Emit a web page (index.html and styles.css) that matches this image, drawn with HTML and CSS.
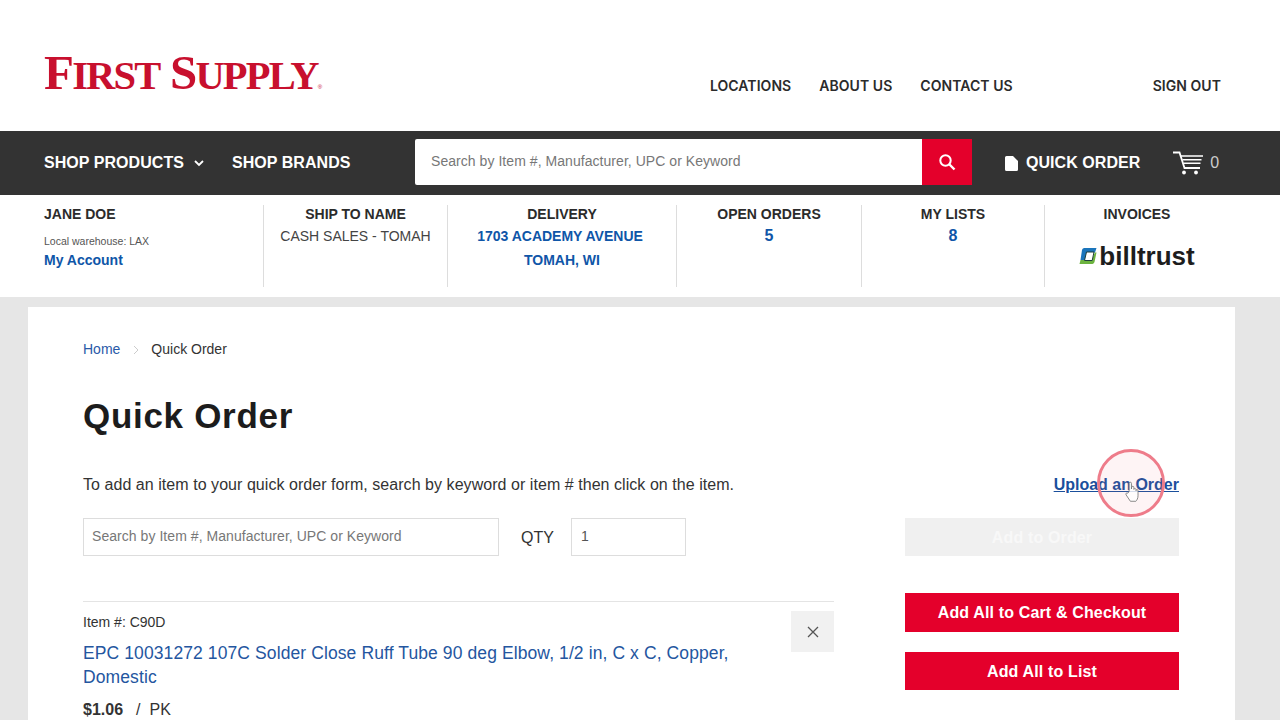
FILE: index.html
```html
<!DOCTYPE html>
<html>
<head>
  <title>First Supply - Quick Order</title>
  <link rel="stylesheet" href="styles.css">
</head>
<body>
  <div class="top">
    <div class="logo">F<span class="sc">irst</span> S<span class="sc">upply</span><span class="reg">®</span></div>
    <div class="top-links">
      <a>LOCATIONS</a>
      <a>ABOUT US</a>
      <a>CONTACT US</a>
      <a class="sign-out">SIGN OUT</a>
    </div>
  </div>

  <div class="nav">
    <a class="shop">SHOP PRODUCTS
      <svg width="10" height="7" viewBox="0 0 10 7"><path d="M1 1l4 4 4-4" fill="none" stroke="#fff" stroke-width="1.8"/></svg>
    </a>
    <a class="brands">SHOP BRANDS</a>
    <div class="search">
      <div class="search-text">Search by Item #, Manufacturer, UPC or Keyword</div>
      <div class="search-btn">
        <svg width="18" height="18" viewBox="0 0 18 18"><circle cx="7.5" cy="7.5" r="5.2" fill="none" stroke="#fff" stroke-width="2"/><path d="M11.5 11.5l5 5" stroke="#fff" stroke-width="2.4"/></svg>
      </div>
    </div>
    <a class="quick">
      <svg width="13" height="15" viewBox="0 0 13 15"><path d="M0 1.5A1.5 1.5 0 0 1 1.5 0H8l5 5v8.500A1.500 1.500 0 0 1 11.500 15h-10A1.500 1.500 0 0 1 0 13.500z" fill="#fff"/></svg>
      QUICK ORDER
    </a>
    <a class="cart">
      <svg width="30" height="24" viewBox="0 0 30 24"><path d="M0 1.500h6.500l5 15.500H27" fill="none" stroke="#fff" stroke-width="1.800"/><path d="M8 5h22M9.500 8.700h19M10.500 12.300h17" fill="none" stroke="#fff" stroke-width="1.500"/><circle cx="11" cy="21.500" r="1.900" fill="#fff"/><circle cx="23" cy="21.500" r="1.900" fill="#fff"/></svg>
      <span>0</span>
    </a>
  </div>

  <div class="info">
    <div class="cell cell-user">
      <div class="cell-head">JANE DOE</div>
      <div class="warehouse">Local warehouse: LAX</div>
      <a class="account">My Account</a>
    </div>
    <div class="cell cell-ship">
      <div class="cell-head">SHIP TO NAME</div>
      <div class="ship-name">CASH SALES - TOMAH</div>
    </div>
    <div class="cell cell-delivery">
      <div class="cell-head">DELIVERY</div>
      <a class="address"><span class="street">1703 ACADEMY AVENUE</span><br>TOMAH, WI</a>
    </div>
    <div class="cell cell-orders">
      <div class="cell-head">OPEN ORDERS</div>
      <a class="count">5</a>
    </div>
    <div class="cell cell-lists">
      <div class="cell-head">MY LISTS</div>
      <a class="count">8</a>
    </div>
    <div class="cell cell-invoices">
      <div class="cell-head">INVOICES</div>
      <div class="billtrust">
        <svg width="18" height="18" viewBox="0 0 18 18">
          <path d="M5 1h12.500L16 5.500H8L6.500 13H1.500L3 3a2.500 2.500 0 0 1 2-2z" fill="#1b75bb"/>
          <path d="M16 5.500h1.500L15.500 15a2.500 2.500 0 0 1-2 2H.5l1-4h5H12.500z" fill="#6cb33f"/>
          <path d="M7.500 5h7.500l-1.800 8.500H5.500z" fill="#fff" stroke="#1d3d3a" stroke-width="1"/>
        </svg>
        <span>billtrust</span>
      </div>
    </div>
  </div>

  <div class="page">
    <div class="panel">
      <div class="crumbs">
        <a>Home</a>
        <svg width="6" height="10" viewBox="0 0 6 10"><path d="M1 1l4 4-4 4" fill="none" stroke="#ccc" stroke-width="1"/></svg>
        <span>Quick Order</span>
      </div>
      <h1>Quick Order</h1>
      <div class="intro-row">
        <div>To add an item to your quick order form, search by keyword or item # then click on the item.</div>
        <a class="upload">Upload an Order</a>
      </div>
      <div class="order-grid">
        <div class="order-left">
          <div class="form-row">
            <div class="field field-search">Search by Item #, Manufacturer, UPC or Keyword</div>
            <label>QTY</label>
            <div class="field field-qty">1</div>
          </div>
          <div class="item">
            <div class="item-body">
              <div class="item-no">Item #: C90D</div>
              <a class="item-name">EPC 10031272 107C Solder Close Ruff Tube 90 deg Elbow, 1/2 in, C x C, Copper, Domestic</a>
              <div class="item-price"><b>$1.06</b><span class="slash">/</span>PK</div>
            </div>
            <div class="remove">
              <svg width="12" height="12" viewBox="0 0 12 12"><path d="M1 1l10 10M11 1L1 11" stroke="#555" stroke-width="1.300"/></svg>
            </div>
          </div>
        </div>
        <div class="order-right">
          <div class="btn btn-off">Add to Order</div>
          <div class="btn btn-checkout">Add All to Cart &amp; Checkout</div>
          <div class="btn btn-list">Add All to List</div>
        </div>
      </div>
    </div>
  </div>

  <div class="pointer">
    <svg width="17" height="23" viewBox="0 0 20 26"><path d="M6 13V3.500a1.400 1.400 0 0 1 2.800 0V10l.2-2a1.300 1.300 0 0 1 2.600.3V10.500a1.300 1.300 0 0 1 2.500 0V12a1.200 1.200 0 0 1 2.400 0v6c0 3-1.500 5.500-2.500 6.500H7.500L2.500 17c-1-1.500.5-3 2-2z" fill="#fff" fill-opacity="0.8" stroke="#777" stroke-width="1"/></svg>
  </div>
</body>
</html>
```

FILE: styles.css
```css
html, body { height: 720px; overflow: hidden; }
body { margin: 0; background: #e6e6e6; font-family: "Liberation Sans", Arial, sans-serif; color: #222; }
a { color: #1a4f9c; }

.top { height: 131px; background: #fff; display: flex; justify-content: space-between; box-sizing: border-box; padding: 0 59px 0 44px; }
.logo { font-family: "Liberation Serif", serif; font-weight: bold; font-size: 49px; letter-spacing: -1.8px; color: #c8102e; line-height: 56px; margin-top: 45px; white-space: nowrap; }
.sc { font-size: 40.500px; text-transform: uppercase; }
.reg { font-family: "Liberation Sans", sans-serif; font-size: 6px; font-weight: normal; letter-spacing: 0; }
.top-links { display: flex; gap: 28px; margin-top: 77px; font-family: Inter, sans-serif; font-size: 14px; font-weight: 600; letter-spacing: 0.05px; line-height: 17px; }
.top-links a { color: #2b2b2b; }
.top-links .sign-out { margin-left: 112px; }

.nav { height: 64px; background: #333; display: flex; align-items: center; padding-left: 44px; font-weight: bold; font-size: 16px; letter-spacing: 0.05px; color: #fff; }
.shop { width: 188px; display: flex; align-items: center; gap: 10px; color: #fff; }
.brands { width: 183px; color: #fff; }
.search { width: 557px; height: 46px; margin-top: -3px; display: flex; background: #fff; border-radius: 2px; }
.search-text { flex: 1; padding-left: 16px; line-height: 44px; font-weight: normal; font-size: 14px; color: #777; }
.search-btn { width: 50px; background: #e4002b; display: flex; align-items: center; justify-content: center; }
.quick { margin-left: 33px; display: flex; align-items: center; gap: 8px; color: #fff; }
.cart { margin-left: 33px; display: flex; align-items: center; gap: 7px; font-weight: normal; color: #ccc; }

.info { height: 102px; background: #fff; display: flex; box-sizing: border-box; padding: 10px 0 10px 44px; font-size: 14px; }
.cell { text-align: center; border-right: 1px solid #ddd; height: 82px; flex: none; }
.cell-head { font-weight: bold; color: #2b2b2b; line-height: 18px; }
.cell-user { width: 219px; text-align: left; }
.cell-ship { width: 183px; }
.cell-delivery { width: 228px; }
.cell-orders { width: 184px; }
.cell-lists { width: 182px; }
.cell-invoices { width: 184px; border-right: 0; }
.warehouse { font-size: 10.500px; color: #555; margin-top: 11px; line-height: 14px; }
.account { display: block; font-weight: bold; margin-top: 3px; line-height: 18px; color: #0f56a8; }
.ship-name { color: #444; margin-top: 4px; line-height: 18px; }
.address { display: block; font-weight: bold; font-size: 14px; color: #0f56a8; margin-top: 1px; line-height: 24px; }
.street { margin-left: -4px; }
.count { display: block; font-weight: bold; font-size: 16px; color: #0f56a8; margin-top: 2px; line-height: 22px; }
.billtrust { display: flex; justify-content: center; align-items: center; gap: 2px; margin-top: 18px; font-weight: bold; font-size: 26px; line-height: 30px; color: #1d1d1d; }

.page { padding: 10px 45px 0 28px; }
.panel { background: #fff; height: 500px; box-sizing: border-box; padding: 34px 56px 0 55px; }
.crumbs { display: flex; align-items: center; gap: 12.500px; font-size: 14px; line-height: 17px; color: #333; }
.crumbs a { color: #2a5aa8; }
h1 { margin: 26px 0 0; font-size: 35px; font-weight: bold; letter-spacing: 0.7px; line-height: 64px; color: #1c1c1c; }
.intro-row { display: flex; justify-content: space-between; margin-top: 27px; font-size: 16px; line-height: 19px; color: #333; letter-spacing: 0.05px; }
.upload { text-decoration: underline; font-weight: bold; letter-spacing: 0; color: #1a4f9c; }

.order-grid { display: flex; justify-content: space-between; margin-top: 24px; }
.order-left { width: 751px; }
.order-right { width: 274px; display: flex; flex-direction: column; }
.form-row { display: flex; align-items: center; height: 38px; }
.field { border: 1px solid #ddd; box-sizing: border-box; height: 38px; line-height: 35px; font-size: 14px; color: #777; }
.field-search { width: 416px; padding-left: 8px; letter-spacing: 0.05px; }
.field-qty { width: 115px; padding-left: 9px; color: #555; }
.form-row label { width: 72px; padding-left: 22px; box-sizing: border-box; font-size: 16px; color: #333; margin-top: 2px; }

.item { margin-top: 45px; border-top: 1px solid #e4e4e4; display: flex; justify-content: space-between; align-items: flex-start; padding-top: 9px; }
.item-body { width: 660px; }
.item-no { font-size: 14px; line-height: 22px; color: #333; }
.item-name { display: block; margin-top: 8px; font-size: 17.500px; line-height: 24px; letter-spacing: 0.1px; color: #24569f; }
.item-price { margin-top: 11px; font-size: 16px; line-height: 19px; color: #333; }
.slash { margin: 0 9px 0 13px; }
.remove { width: 43px; height: 41px; background: #f1f1f1; display: flex; align-items: center; justify-content: center; }

.btn { height: 39px; line-height: 39px; text-align: center; font-size: 16px; font-weight: bold; letter-spacing: 0.15px; color: #fff; }
.btn-off { background: #f0f0f0; color: #f8f8f8; height: 38px; }
.btn-checkout { background: #e4002b; margin-top: 37px; }
.btn-list { background: #e4002b; margin-top: 20px; height: 38px; }

.pointer { position: absolute; left: 1097px; top: 449px; width: 68px; height: 68px; box-sizing: border-box; border: 3px solid #ee7c8a; border-radius: 50%; background: rgba(238, 111, 127, 0.08); display: flex; align-items: center; justify-content: center; padding: 16px 0 0 3px; }
```
